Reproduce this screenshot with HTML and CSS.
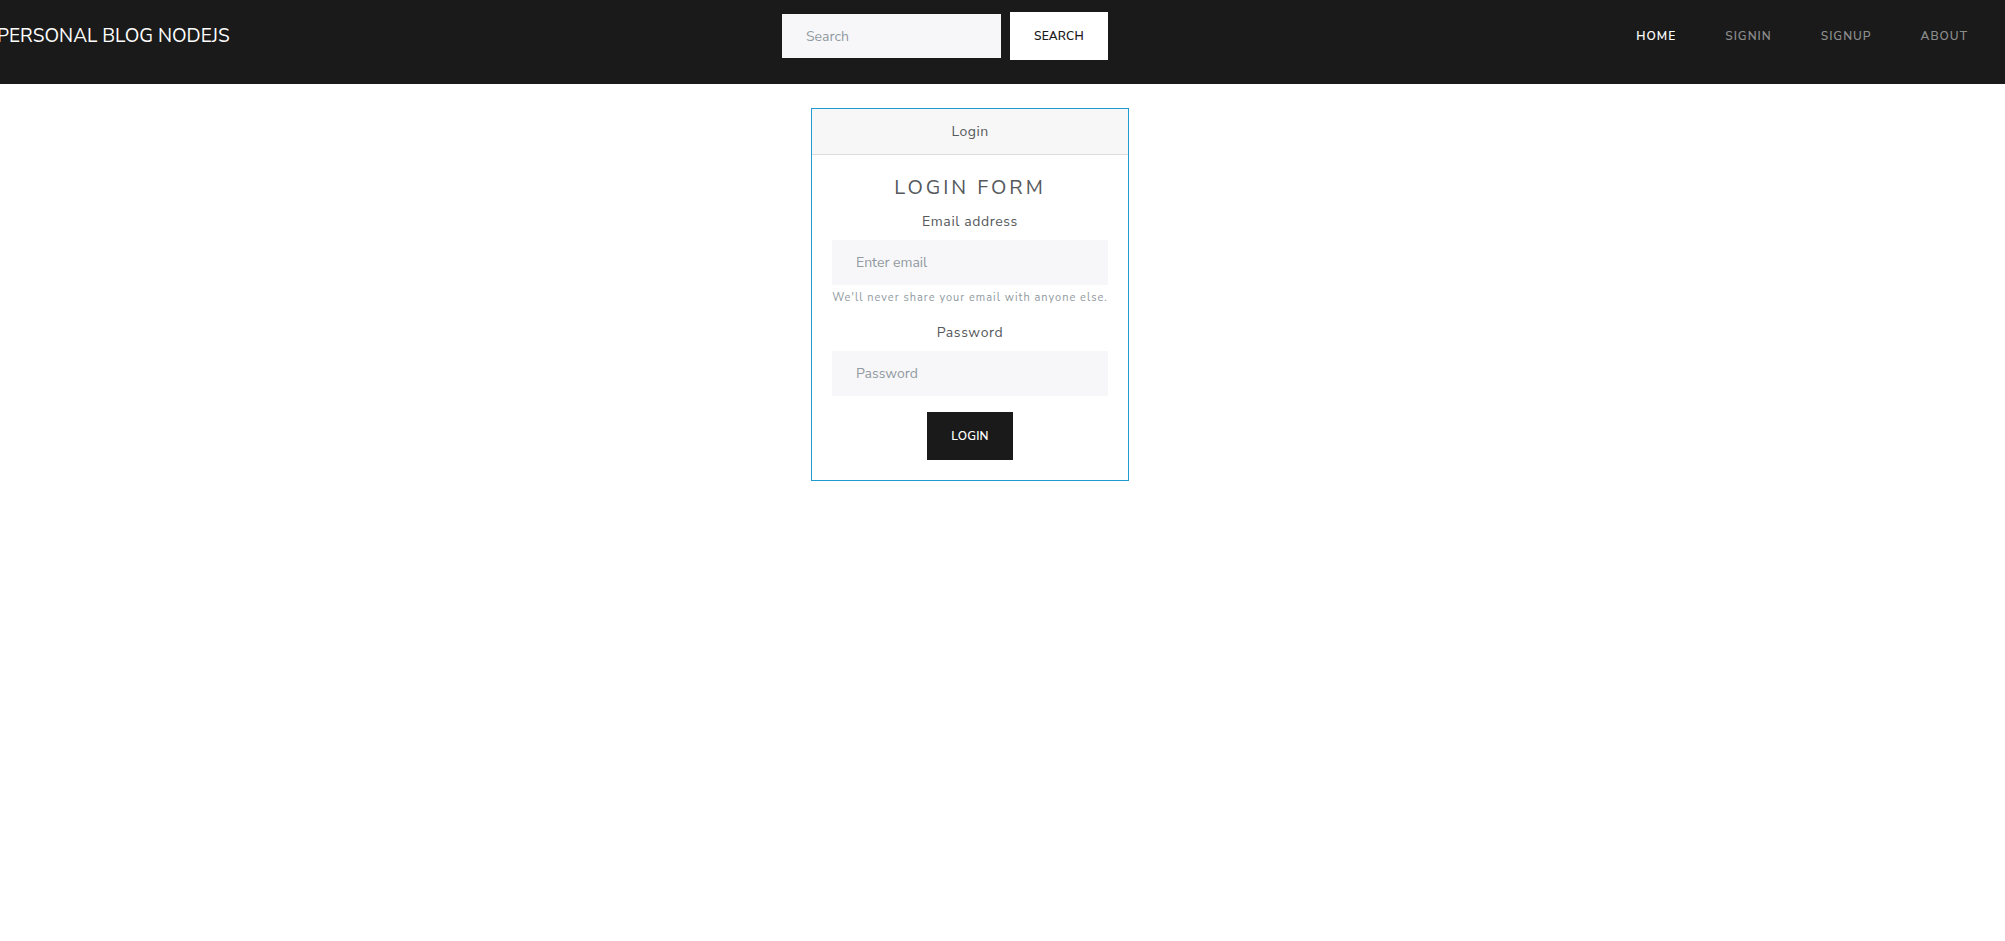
FILE: index.html
```html
<!DOCTYPE html>
<html lang="en">
<head>
<meta charset="utf-8">
<title>Personal Blog NodeJS - Login</title>
<link rel="stylesheet" href="styles.css">
</head>
<body>
<nav class="navbar">
  <a class="brand" href="#">PERSONAL BLOG NODEJS</a>
  <form class="search">
    <input class="search-input" type="text" placeholder="Search">
    <button class="btn btn-light" type="button">Search</button>
  </form>
  <ul class="nav">
    <li><a class="nav-link active" href="#">Home</a></li>
    <li><a class="nav-link" href="#">Signin</a></li>
    <li><a class="nav-link" href="#">Signup</a></li>
    <li><a class="nav-link" href="#">About</a></li>
  </ul>
</nav>
<main class="main">
  <div class="card">
    <div class="card-header">Login</div>
    <div class="card-body">
      <h4 class="card-title">Login Form</h4>
      <div class="form-group">
        <label class="label" for="email">Email address</label>
        <input class="form-control" id="email" type="email" placeholder="Enter email">
        <small class="hint">We'll never share your email with anyone else.</small>
      </div>
      <div class="form-group">
        <label class="label" for="password">Password</label>
        <input class="form-control" id="password" type="password" placeholder="Password">
      </div>
      <div class="actions">
        <button class="btn btn-dark" type="button">Login</button>
      </div>
    </div>
  </div>
</main>
</body>
</html>
```
FILE: styles.css
```css
* { box-sizing: border-box; }
html, body { margin: 0; padding: 0; }
body {
  font-family: "Nunito Sans", "Lato", "Open Sans", sans-serif;
  font-size: 14px;
  line-height: 1.5;
  color: #55595c;
  background: #fff;
}

.navbar {
  display: flex;
  align-items: center;
  height: 84px;
  padding: 12px 37px 24px 0;
  background: #1a1a1a;
}
.brand {
  flex: none;
  width: 229px;
  margin-left: -3px;
  color: #fff;
  text-decoration: none;
  font-size: 19px;
  line-height: 48px;
  letter-spacing: 0;
  white-space: nowrap;
}
.search {
  display: flex;
  align-items: center;
  gap: 9px;
  margin: 0 0 0 556px;
}
.search-input {
  width: 219px;
  height: 44px;
  padding: 0 24px;
  border: 0;
  background: #f7f7f9;
  font-family: inherit;
  font-size: 14px;
  color: #55595c;
  outline: none;
}
.search-input::placeholder, .form-control::placeholder { color: #919aa1; }

.btn {
  border: 0;
  padding: 15px 24px;
  font-family: inherit;
  font-size: 12px;
  font-weight: 600;
  line-height: 18px;
  text-transform: uppercase;
  letter-spacing: 0.2px;
  cursor: pointer;
}
.btn-light { background: #fff; color: #1a1a1a; }
.btn-dark { background: #1a1a1a; color: #fff; }

.nav {
  display: flex;
  gap: 49px;
  margin: 0 0 0 auto;
  padding: 0;
  list-style: none;
}
.nav-link {
  color: #8c8c8c;
  text-decoration: none;
  font-size: 12px;
  font-weight: 600;
  letter-spacing: 1px;
  text-transform: uppercase;
  line-height: 48px;
}
.nav-link.active { color: #fff; }

.main { padding: 24px 0 0 811px; }
.card {
  width: 318px;
  border: 1px solid #1f9bcf;
  background: #fff;
}
.card-header {
  padding: 12px 20px;
  background: #f7f7f7;
  border-bottom: 1px solid #dcdcdc;
  text-align: center;
  line-height: 21px;
  letter-spacing: 0.5px;
}
.card-body {
  padding: 20px;
  text-align: center;
}
.card-title {
  margin: 1px 0 11px;
  font-size: 20px;
  font-weight: 400;
  line-height: 24px;
  letter-spacing: 3px;
  text-transform: uppercase;
  color: #55595c;
}
.form-group { margin-bottom: 16px; }
.label {
  display: block;
  margin-bottom: 8px;
  line-height: 21px;
  letter-spacing: 0.6px;
}
.form-control {
  display: block;
  width: 100%;
  height: 45px;
  padding: 0 24px;
  border: 0;
  background: #f7f7f9;
  font-family: inherit;
  font-size: 14px;
  color: #55595c;
  outline: none;
}
.hint {
  display: block;
  margin-top: 4px;
  font-size: 11px;
  line-height: 17px;
  letter-spacing: 1px;
  color: #919aa1;
}
.actions { display: flex; justify-content: center; }
```
